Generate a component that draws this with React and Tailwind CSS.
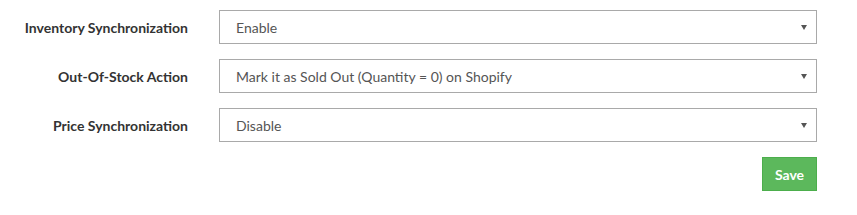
export default function App() {
  const rows = [
    { label: "Inventory Synchronization", value: "Enable" },
    { label: "Out-Of-Stock Action", value: "Mark it as Sold Out (Quantity = 0) on Shopify" },
    { label: "Price Synchronization", value: "Disable" },
  ];

  return (
    <div className="h-[215px] w-[857px] bg-white pt-[10px] font-['Lato','Noto_Sans',sans-serif] text-[14px] text-[#333]">
      <div className="flex flex-col gap-[15px] pr-[40px]">
        {rows.map((r) => (
          <div key={r.label} className="flex items-center">
            <label className="w-[188px] shrink-0 text-right font-bold">{r.label}</label>
            <div className="ml-[31px] flex h-[34px] flex-1 items-center justify-between border border-[#a9a9a9] pl-[16px] pr-[9px] text-[#555]">
              <span>{r.value}</span>
              <svg width="6" height="5" viewBox="0 0 6 5" className="mt-[1px]">
                <path d="M0 0h6L3 5z" fill="#555" />
              </svg>
            </div>
          </div>
        ))}
        <div className="flex justify-end">
          <button className="h-[34px] w-[55px] border border-[#4cae4c] bg-[#5cb85c] text-[14px] font-bold text-white">
            Save
          </button>
        </div>
      </div>
    </div>
  );
}
